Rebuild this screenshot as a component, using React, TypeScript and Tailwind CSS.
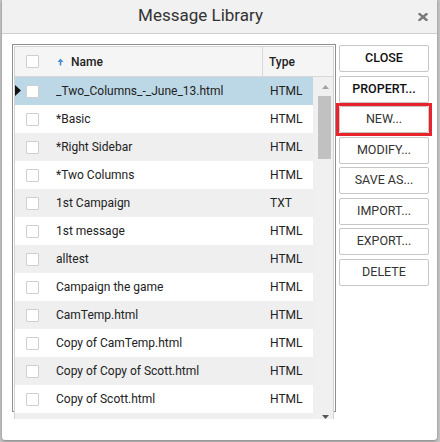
import React from "react";

const rows: { name: string; type: string }[] = [
  { name: "_Two_Columns_-_June_13.html", type: "HTML" },
  { name: "*Basic", type: "HTML" },
  { name: "*Right Sidebar", type: "HTML" },
  { name: "*Two Columns", type: "HTML" },
  { name: "1st Campaign", type: "TXT" },
  { name: "1st message", type: "HTML" },
  { name: "alltest", type: "HTML" },
  { name: "Campaign the game", type: "HTML" },
  { name: "CamTemp.html", type: "HTML" },
  { name: "Copy of CamTemp.html", type: "HTML" },
  { name: "Copy of Copy of Scott.html", type: "HTML" },
  { name: "Copy of Scott.html", type: "HTML" },
  { name: "", type: "" },
];

const buttons = ["CLOSE", "PROPERT...", "NEW...", "MODIFY...", "SAVE AS...", "IMPORT...", "EXPORT...", "DELETE"];

function Checkbox() {
  return <div className="w-[13px] h-[13px] border border-[#cfcfcf] bg-white rounded-[1px]" />;
}

export default function App() {
  return (
    <div
      className="w-[440px] h-[442px] bg-[#c4c4c4] overflow-hidden relative"
      style={{ fontFamily: "Roboto, 'Liberation Sans', sans-serif" }}
    >
      <div className="absolute left-[2px] top-0 w-[435px] h-[440px] bg-white flex flex-col rounded-b-[3px] shadow-[0_1px_3px_rgba(0,0,0,0.35)]">
        {/* Title bar */}
        <div className="h-[34px] bg-[#f1f1f1] border-b border-[#d0d0d0] flex items-center justify-center pr-[38px] relative shrink-0">
          <span className="text-[17px] text-[#333] leading-none mt-[-3px]">Message Library</span>
          <svg className="absolute left-[416px] top-[13px]" width="10" height="8" viewBox="0 0 10 8">
            <path d="M1.5 1 L8.5 7 M8.5 1 L1.5 7" stroke="#7a7a7a" strokeWidth="2.4" strokeLinecap="square" />
          </svg>
        </div>
        {/* Body */}
        <div className="flex pl-[10px] pt-[10px]">
          {/* Grid */}
          <div className="w-[324px] h-[368px] border border-[#8f8f8f] p-px shrink-0">
            <div className="h-[373px] border-l border-t border-r border-[#d4d4d4] flex flex-col overflow-hidden">
              {/* Header */}
              <div className="h-[30px] flex bg-[#f5f5f5] border-b border-[#d8d8d8] shrink-0 text-[12px] text-[#222] font-medium">
                <div className="w-[41px] flex items-center pl-[11px]">
                  <Checkbox />
                </div>
                <div className="flex-1 flex items-center pl-[1px]">
                  <svg width="7" height="8" viewBox="0 0 7 8" className="mr-[7px]">
                    <path d="M3.5 0.5 L6.5 4 L4.3 4 L4.3 7.5 L2.7 7.5 L2.7 4 L0.5 4 Z" fill="#4a8ccc" />
                  </svg>
                  <span>Name</span>
                </div>
                <div className="w-[71px] border-l border-[#d8d8d8] flex items-center pl-[6px]">Type</div>
              </div>
              {/* Body */}
              <div className="flex flex-1 min-h-0">
                <div className="flex-1 flex flex-col">
                  {rows.map((r, i) => {
                    const bg = i === 0 ? "bg-[#bcd8e6]" : i % 2 === 0 ? "bg-[#efefef]" : "bg-white";
                    return (
                      <div key={i} className={`h-[28px] shrink-0 flex items-center text-[12px] text-[#222] ${bg}`}>
                        <div className="w-[41px] relative flex items-center pl-[11px] h-full">
                          {i === 0 && (
                            <svg className="absolute left-0 top-[8px]" width="6" height="11" viewBox="0 0 6 11">
                              <path d="M0 0 L6 5.5 L0 11 Z" fill="#111" />
                            </svg>
                          )}
                          {r.name !== "" && <Checkbox />}
                        </div>
                        <div className="flex-1 truncate">{r.name}</div>
                        <div className="w-[50px] pl-[7px]">{r.type}</div>
                      </div>
                    );
                  })}
                </div>
                {/* Scrollbar */}
                <div className="w-[20px] bg-[#f0f0f0] relative shrink-0">
                  <svg className="absolute left-[9px] top-[8px]" width="7" height="4" viewBox="0 0 7 4">
                    <path d="M0 4 L3.5 0 L7 4 Z" fill="#a3a3a3" />
                  </svg>
                  <div className="absolute left-[5px] top-[19px] w-[13px] h-[63px] bg-[#c1c1c1]" />
                  <svg className="absolute left-[9px] top-[338px]" width="7" height="4" viewBox="0 0 7 4">
                    <path d="M0 0 L3.5 4 L7 0 Z" fill="#555" />
                  </svg>
                </div>
              </div>
            </div>
          </div>
          {/* Buttons */}
          <div className="ml-[3px] w-[90px] flex flex-col gap-[3.5px] mt-[1px]">
            {buttons.map((b, i) => {
              const strong = i < 2;
              const btn = (
                <div
                  className={`h-[27px] w-[90px] bg-white border border-[#c6c6c6] rounded-[2px] flex items-center justify-center text-[12.5px] ${
                    strong ? "font-medium text-[#111]" : "text-[#333]"
                  }`}
                >
                  {b}
                </div>
              );
              if (b === "NEW...") {
                return (
                  <div key={b} className="relative">
                    {btn}
                    <div className="absolute left-[-3px] top-[-3px] w-[96px] h-[33px] border-[3px] border-[#e8232b]" />
                  </div>
                );
              }
              return <React.Fragment key={b}>{btn}</React.Fragment>;
            })}
          </div>
        </div>
      </div>
    </div>
  );
}
